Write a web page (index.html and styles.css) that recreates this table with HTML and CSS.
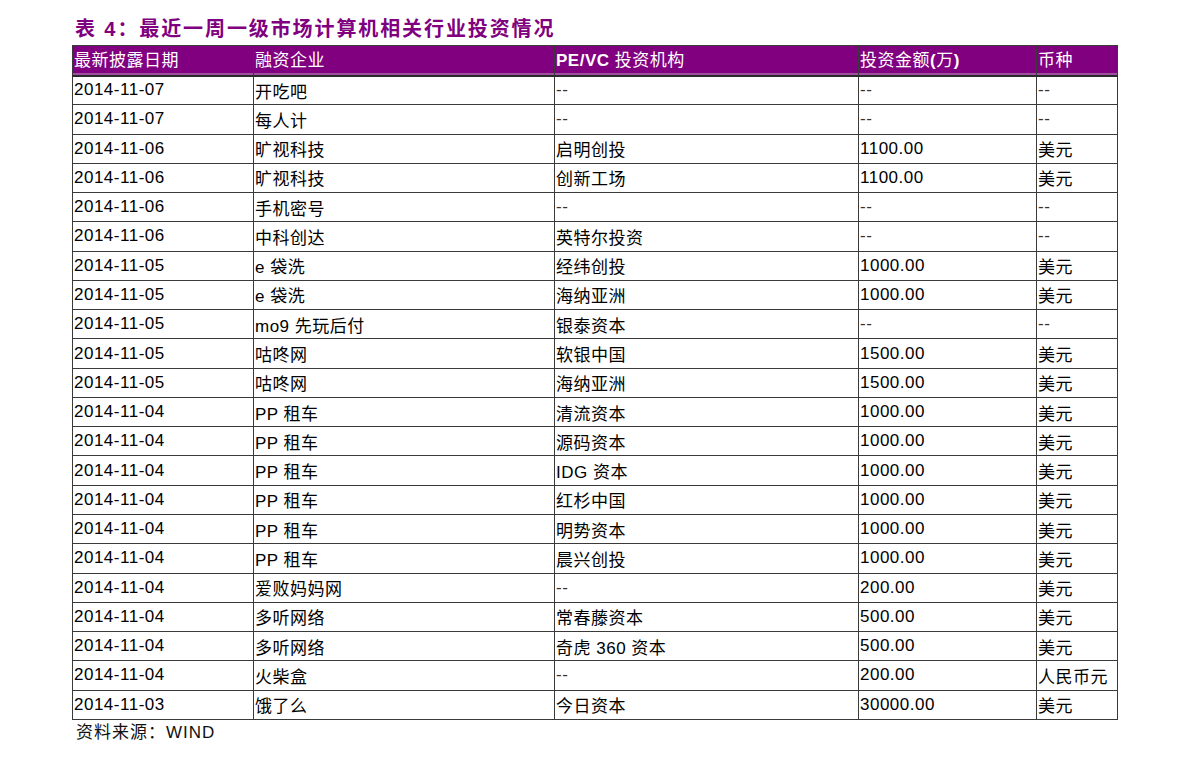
FILE: index.html
```html
<!DOCTYPE html>
<html lang="zh-CN">
<head>
<meta charset="utf-8">
<title>表4</title>
<link rel="stylesheet" href="styles.css">
</head>
<body>
<div class="page">
  <h1 class="title">表 4：最近一周一级市场计算机相关行业投资情况</h1>
  <table class="deals">
    <colgroup>
      <col class="c1"><col class="c2"><col class="c3"><col class="c4"><col class="c5">
    </colgroup>
    <thead>
      <tr><th>最新披露日期</th><th>融资企业</th><th><span class="b">PE/VC</span> 投资机构</th><th>投资金额<span class="b">(</span>万<span class="b">)</span></th><th>币种</th></tr>
    </thead>
    <tbody>
      <tr><td>2014-11-07</td><td>开吃吧</td><td class="dash">--</td><td class="dash">--</td><td class="dash">--</td></tr>
      <tr><td>2014-11-07</td><td>每人计</td><td class="dash">--</td><td class="dash">--</td><td class="dash">--</td></tr>
      <tr><td>2014-11-06</td><td>旷视科技</td><td>启明创投</td><td>1100.00</td><td>美元</td></tr>
      <tr><td>2014-11-06</td><td>旷视科技</td><td>创新工场</td><td>1100.00</td><td>美元</td></tr>
      <tr><td>2014-11-06</td><td>手机密号</td><td class="dash">--</td><td class="dash">--</td><td class="dash">--</td></tr>
      <tr><td>2014-11-06</td><td>中科创达</td><td>英特尔投资</td><td class="dash">--</td><td class="dash">--</td></tr>
      <tr><td>2014-11-05</td><td>e 袋洗</td><td>经纬创投</td><td>1000.00</td><td>美元</td></tr>
      <tr><td>2014-11-05</td><td>e 袋洗</td><td>海纳亚洲</td><td>1000.00</td><td>美元</td></tr>
      <tr><td>2014-11-05</td><td>mo9 先玩后付</td><td>银泰资本</td><td class="dash">--</td><td class="dash">--</td></tr>
      <tr><td>2014-11-05</td><td>咕咚网</td><td>软银中国</td><td>1500.00</td><td>美元</td></tr>
      <tr><td>2014-11-05</td><td>咕咚网</td><td>海纳亚洲</td><td>1500.00</td><td>美元</td></tr>
      <tr><td>2014-11-04</td><td>PP 租车</td><td>清流资本</td><td>1000.00</td><td>美元</td></tr>
      <tr><td>2014-11-04</td><td>PP 租车</td><td>源码资本</td><td>1000.00</td><td>美元</td></tr>
      <tr><td>2014-11-04</td><td>PP 租车</td><td>IDG 资本</td><td>1000.00</td><td>美元</td></tr>
      <tr><td>2014-11-04</td><td>PP 租车</td><td>红杉中国</td><td>1000.00</td><td>美元</td></tr>
      <tr><td>2014-11-04</td><td>PP 租车</td><td>明势资本</td><td>1000.00</td><td>美元</td></tr>
      <tr><td>2014-11-04</td><td>PP 租车</td><td>晨兴创投</td><td>1000.00</td><td>美元</td></tr>
      <tr><td>2014-11-04</td><td>爱败妈妈网</td><td class="dash">--</td><td>200.00</td><td>美元</td></tr>
      <tr><td>2014-11-04</td><td>多听网络</td><td>常春藤资本</td><td>500.00</td><td>美元</td></tr>
      <tr><td>2014-11-04</td><td>多听网络</td><td>奇虎 360 资本</td><td>500.00</td><td>美元</td></tr>
      <tr><td>2014-11-04</td><td>火柴盒</td><td class="dash">--</td><td>200.00</td><td>人民币元</td></tr>
      <tr><td>2014-11-03</td><td>饿了么</td><td>今日资本</td><td>30000.00</td><td>美元</td></tr>
    </tbody>
  </table>
  <p class="source">资料来源：WIND</p>
</div>
</body>
</html>
```
FILE: styles.css
```css
html, body {
  margin: 0;
  padding: 0;
  background: #ffffff;
}

body {
  font-family: "Liberation Sans", "Noto Sans CJK SC", sans-serif;
  color: #000000;
}

.page {
  padding: 17px 0 0 72px;
  width: 1045px;
}

.title {
  margin: 0 0 4px 3px;
  font-size: 20px;
  line-height: 24px;
  font-weight: bold;
  color: #800080;
  letter-spacing: 1.9px;
}

.deals {
  border-collapse: collapse;
  table-layout: fixed;
  width: 1045px;
  font-size: 17px;
}

.c1 { width: 181px; }
.c2 { width: 301px; }
.c3 { width: 304px; }
.c4 { width: 178px; }
.c5 { width: 81px; }

.deals th,
.deals td {
  border: 1.5px solid #3a3a3a;
  padding: 0 0 0 1px;
  text-align: left;
  vertical-align: middle;
  white-space: nowrap;
  overflow: hidden;
  letter-spacing: 0.5px;
}

.deals thead tr {
  height: 30px;
}

.deals th {
  background: #800080;
  color: #ffffff;
  font-weight: normal;
  font-size: 17px;
  padding-bottom: 3px;
  border-bottom: 2px solid #2a2a2a;
  box-shadow: inset 0 -2px 0 #a050a0;
}

.deals th .b {
  font-weight: bold;
}

.deals tbody tr {
  height: 29.27px;
}

.deals td {
  font-size: 17px;
}

.deals td.dash {
  color: #333333;
}

.source {
  margin: 1px 0 0 4px;
  font-size: 17px;
  line-height: 24px;
  letter-spacing: 1px;
  color: #111111;
}
```
